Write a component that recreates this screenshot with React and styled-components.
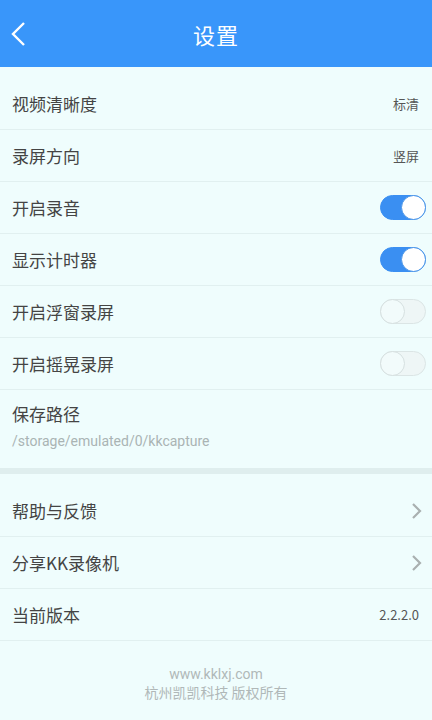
import React from "react";
import styled, { createGlobalStyle } from "styled-components";

const GlobalStyle = createGlobalStyle`
  html, body {
    margin: 0;
    padding: 0;
    background: #effdfd;
  }
  body {
    font-family: "Noto Sans CJK SC", "Noto Sans", sans-serif;
    color: #444;
  }
`;

const Page = styled.div`
  width: 432px;
  min-height: 720px;
  background: #effdfd;
  display: flex;
  flex-direction: column;
`;

const Header = styled.div`
  height: 67px;
  background: #3996fa;
  display: flex;
  align-items: center;
  justify-content: center;
  position: relative;
`;

const Back = styled.div`
  position: absolute;
  left: 10px;
  top: 21px;
  width: 18px;
  height: 26px;
`;

const Title = styled.h1`
  margin: 0;
  font-size: 22px;
  font-weight: 400;
  color: #fff;
  letter-spacing: 1px;
`;

const Group = styled.div`
  padding-top: 11px;
  display: flex;
  flex-direction: column;
`;

const Row = styled.div`
  height: ${(p) => (p.tall ? 78 : 51)}px;
  padding: 0 5px 0 12px;
  border-bottom: ${(p) => (p.last ? "none" : "1px solid #e1f0f0")};
  display: flex;
  align-items: center;
  justify-content: space-between;
`;

const Label = styled.span`
  font-size: 17px;
  color: #444;
`;

const Value = styled.span`
  font-size: 13px;
  color: #555;
  margin-right: 8px;
`;

const Stack = styled.div`
  display: flex;
  flex-direction: column;
  gap: 7px;
  padding-bottom: 8px;
`;

const Path = styled.span`
  font-family: "Roboto", "Noto Sans", sans-serif;
  font-size: 14px;
  color: #aab4b4;
`;

const Band = styled.div`
  height: 6px;
  background: #dfeeee;
`;

const Toggle = styled.div`
  width: 46px;
  height: 25px;
  border-radius: 13px;
  box-sizing: border-box;
  position: relative;
  background: ${(p) => (p.on ? "#3a8ff2" : "#eef6f6")};
  border: 1px solid ${(p) => (p.on ? "#3a8ff2" : "#dbe5e5")};
  margin-right: 1px;
`;

const Knob = styled.div`
  position: absolute;
  top: -1px;
  left: ${(p) => (p.on ? "20px" : "-1px")};
  width: 25px;
  height: 25px;
  border-radius: 50%;
  box-sizing: border-box;
  background: ${(p) => (p.on ? "#fff" : "#f2fbfb")};
  border: 1px solid ${(p) => (p.on ? "#4a95e8" : "#d6e0e0")};
`;

const Footer = styled.div`
  padding-top: 24px;
  display: flex;
  flex-direction: column;
  align-items: center;
  font-size: 14px;
  line-height: 18px;
  color: #b0b8b8;
`;

const Url = styled.span`
  font-family: "Roboto", "Noto Sans", sans-serif;
`;

const Chevron = () => (
  <svg width="12" height="18" viewBox="0 0 12 18" style={{ marginRight: 4 }}>
    <path d="M2 2 L9 9 L2 16" fill="none" stroke="#a9b0b0" strokeWidth="2.2" />
  </svg>
);

const Switch = ({ on }) => (
  <Toggle on={on ? 1 : 0}>
    <Knob on={on ? 1 : 0} />
  </Toggle>
);

export default function App() {
  return (
    <Page>
      <GlobalStyle />
      <Header>
        <Back>
          <svg width="18" height="26" viewBox="0 0 18 26">
            <path d="M14 2 L3 13 L14 24" fill="none" stroke="#fff" strokeWidth="2.4" />
          </svg>
        </Back>
        <Title>设置</Title>
      </Header>
      <Group>
        <Row>
          <Label>视频清晰度</Label>
          <Value>标清</Value>
        </Row>
        <Row>
          <Label>录屏方向</Label>
          <Value>竖屏</Value>
        </Row>
        <Row>
          <Label>开启录音</Label>
          <Switch on />
        </Row>
        <Row>
          <Label>显示计时器</Label>
          <Switch on />
        </Row>
        <Row>
          <Label>开启浮窗录屏</Label>
          <Switch />
        </Row>
        <Row>
          <Label>开启摇晃录屏</Label>
          <Switch />
        </Row>
        <Row tall last>
          <Stack>
            <Label>保存路径</Label>
            <Path>/storage/emulated/0/kkcapture</Path>
          </Stack>
        </Row>
      </Group>
      <Band />
      <Group>
        <Row>
          <Label>帮助与反馈</Label>
          <Chevron />
        </Row>
        <Row>
          <Label>分享KK录像机</Label>
          <Chevron />
        </Row>
        <Row>
          <Label>当前版本</Label>
          <Value>2.2.2.0</Value>
        </Row>
      </Group>
      <Footer>
        <Url>www.kklxj.com</Url>
        <span>杭州凯凯科技 版权所有</span>
      </Footer>
    </Page>
  );
}
